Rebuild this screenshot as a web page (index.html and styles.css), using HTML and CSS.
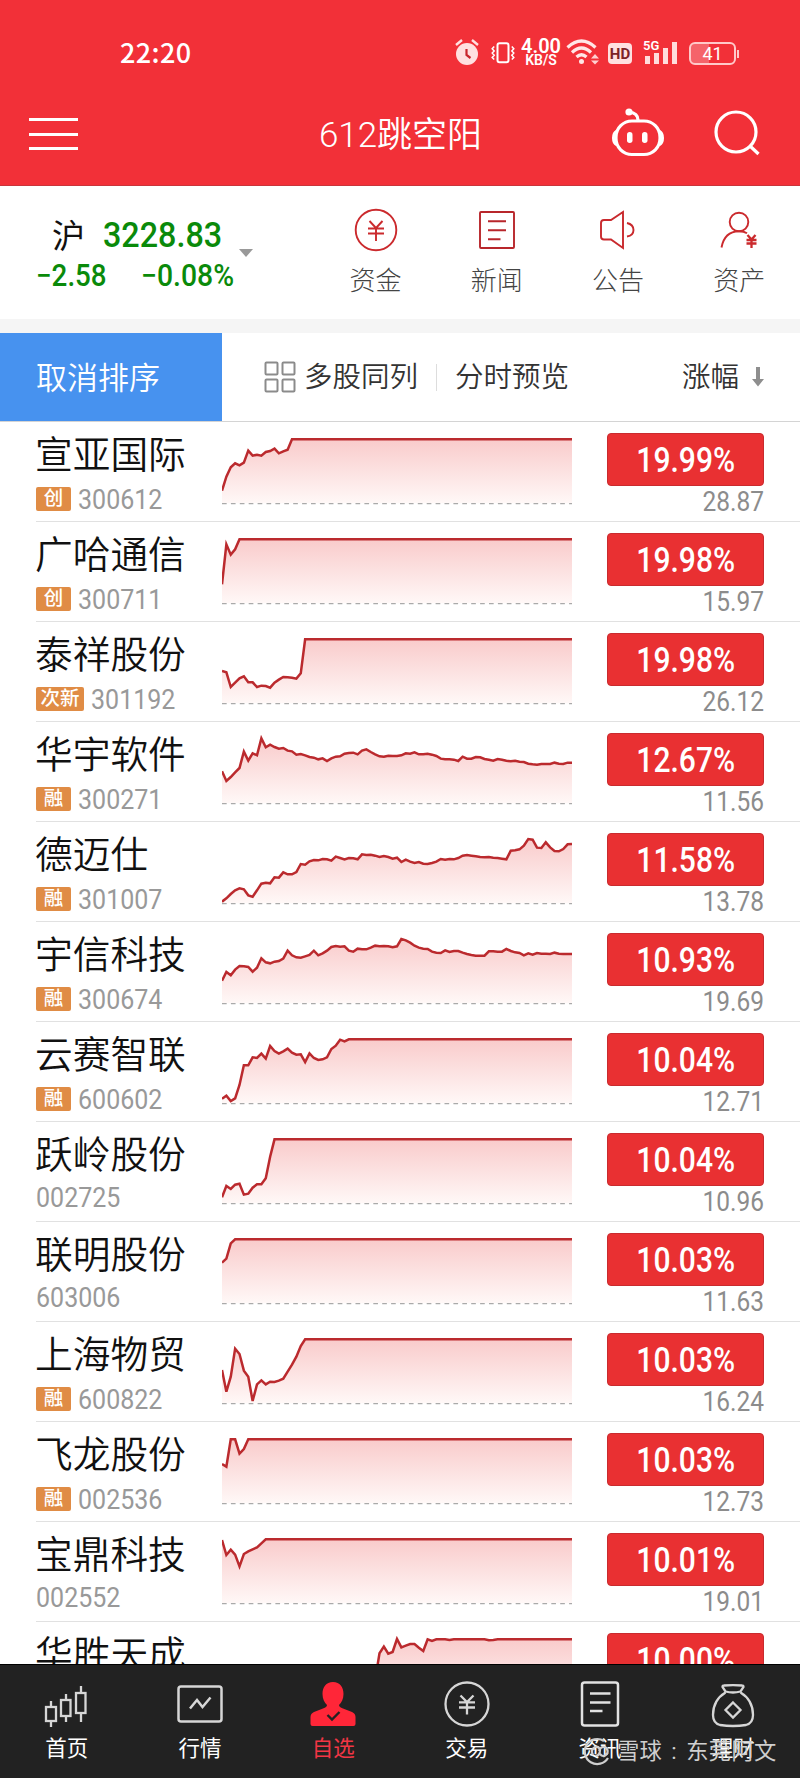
FILE: index.html
```html
<!DOCTYPE html>
<html lang="zh-CN">
<head>
  <meta charset="UTF-8">
  <meta name="viewport" content="width=device-width, initial-scale=1.0">
  <title>自选</title>
  <link rel="stylesheet" href="styles.css">
</head>
<body>
  <div class="app">
    <header class="header">
      <div class="status">
        <span class="time">22:20</span>
        <div class="status-icons">
          <svg class="ic-alarm" width="24" height="27" viewBox="0 0 24 27">
            <circle cx="12" cy="15" r="11" fill="#ffe0e0"/>
            <path d="M1 6l6-5M23 6l-6-5" stroke="#ffe0e0" stroke-width="2.4"/>
            <path d="M11.500 10v6l4 3" fill="none" stroke="#c8252d" stroke-width="2.200"/>
          </svg>
          <svg class="ic-vibrate" width="24" height="22" viewBox="0 0 24 22">
            <rect x="6.500" y="1.300" width="11" height="19" rx="2" fill="none" stroke="#fff" stroke-width="2"/>
            <path d="M3.200 4.500l-2 2.200 2 2.200-2 2.200 2 2.200-2 2.200 2 2M20.800 4.500l2 2.200-2 2.200 2 2.200-2 2.200 2 2.200-2 2" fill="none" stroke="#fff" stroke-width="1.500"/>
          </svg>
          <div class="speed"><b>4.00</b><span>KB/S</span></div>
          <svg class="ic-wifi" width="34" height="26" viewBox="0 0 34 26">
            <g fill="none" stroke="#ffe6e6" stroke-width="3.200">
              <path d="M1.500 8.500Q15.500-4.500 29.500 8.500"/>
              <path d="M6 13.500Q15.500 4.500 25 13.500"/>
              <path d="M10.500 18Q15.500 13.500 20.500 18"/>
            </g>
            <circle cx="15.500" cy="22.500" r="2.500" fill="#ffe6e6"/>
            <path d="M25 19.500l4-4.500 4 4.500zM25 21.500l4 4 4-4z" fill="#ffd0d0"/>
          </svg>
          <span class="hd">HD</span>
          <div class="signal">
            <small>5G</small>
            <svg width="36" height="24" viewBox="0 0 36 24" fill="#ffdcdc">
              <rect x="3" y="15" width="5" height="8"/>
              <rect x="12" y="12" width="5" height="11"/>
              <rect x="21" y="7" width="5" height="16"/>
              <rect x="30" y="1" width="5" height="22"/>
            </svg>
          </div>
          <div class="battery">41</div>
        </div>
      </div>
      <div class="titlebar">
        <div class="menu"><i></i><i></i><i></i></div>
        <h1>612跳空阳</h1>
        <svg class="ic-robot" width="54" height="50" viewBox="0 0 54 50">
          <g fill="none" stroke="#fff" stroke-width="3.200">
            <rect x="5" y="14" width="44" height="33.500" rx="16"/>
            <path d="M27 13Q27 6 18 5"/>
          </g>
          <circle cx="18" cy="5" r="3.600" fill="#fff"/>
          <path d="M5 23Q1 25 1 31q0 6 4 8zM49 23q4 2 4 8 0 6-4 8z" fill="#fff"/>
          <rect x="16" y="25" width="5.500" height="11" rx="2.700" fill="#fff"/>
          <rect x="31" y="25" width="5.500" height="11" rx="2.700" fill="#fff"/>
        </svg>
        <svg class="ic-search" width="46" height="46" viewBox="0 0 46 46" fill="none" stroke="#fff" stroke-width="3.200">
          <circle cx="22" cy="22" r="20"/>
          <path d="M35.500 35.500l9 8.500"/>
        </svg>
      </div>
    </header>

    <section class="summary">
      <div class="index">
        <div class="index-top"><span class="market">沪</span><span class="point">3228.83</span></div>
        <div class="index-sub"><span class="change">−2.58</span><span class="rate">−0.08%</span></div>
        <i class="caret"></i>
      </div>
      <ul class="shortcuts">
        <li>
          <svg width="44" height="44" viewBox="0 0 44 44" fill="none" stroke="#cb2a2d" stroke-width="1.900">
            <circle cx="22" cy="22" r="20.300"/>
            <path d="M15.500 13l6.500 7 6.500-7M14 20.500h16M14 25.500h16M22 20.500V33"/>
          </svg>
          <span>资金</span>
        </li>
        <li>
          <svg width="44" height="44" viewBox="0 0 44 44" fill="none" stroke="#b8262b" stroke-width="1.900">
            <rect x="5" y="4" width="34" height="36" rx="1"/>
            <path d="M13 13.300h18M13 22.300h18M13 31.300h12.500"/>
          </svg>
          <span>新闻</span>
        </li>
        <li>
          <svg width="44" height="44" viewBox="0 0 44 44" fill="none" stroke="#c9292d" stroke-width="1.900">
            <path d="M5 15q0-3 3-3h7l12-8v36l-12-8.500H8q-3 0-3-3z"/>
            <path d="M31 15q6.500 1.500 6.500 7T31 28.500"/>
          </svg>
          <span>公告</span>
        </li>
        <li>
          <svg width="44" height="44" viewBox="0 0 44 44" fill="none" stroke="#cb2a2d" stroke-width="1.900">
            <circle cx="22" cy="14" r="9.300"/>
            <path d="M4.500 39.500Q7.500 23.500 22 23.300q5 0 8 2"/>
            <path d="M30.500 27l4 4.500 4-4.500M29.500 32h10M29.500 35.500h10M34.500 31.500V40" stroke-width="2.300"/>
          </svg>
          <span>资产</span>
        </li>
      </ul>
    </section>

    <section class="toolbar">
      <button class="cancel">取消排序</button>
      <div class="tools">
        <svg width="32" height="32" viewBox="0 0 32 32" fill="none" stroke="#8b8b8b" stroke-width="2">
          <rect x="1.500" y="1.500" width="12" height="12" rx="1"/><rect x="18.500" y="1.500" width="12" height="12" rx="1"/>
          <rect x="1.500" y="18.500" width="12" height="12" rx="1"/><rect x="18.500" y="18.500" width="12" height="12" rx="1"/>
        </svg>
        <span class="multi">多股同列</span>
        <span class="preview">分时预览</span>
        <span class="sort">涨幅</span>
        <svg class="ic-down" width="12" height="20" viewBox="0 0 12 20" fill="#8e8e8e"><path d="M4 0h4v12h4l-6 7.500L0 12h4z"/></svg>
      </div>
    </section>

    <main class="list" id="list"></main>

    <nav class="nav">
      <a>
        <svg width="46" height="46" viewBox="0 0 46 46" fill="none" stroke="#d6d6d6" stroke-width="2.300">
          <path d="M7 20v6M7 40v6M22 13v6M22 35v6M37 5v7M37 32v9"/>
          <rect x="2" y="26" width="10" height="14"/><rect x="17" y="19" width="9.500" height="16"/><rect x="32" y="12" width="9.500" height="20"/>
        </svg>
        <span>首页</span>
      </a>
      <a>
        <svg width="46" height="46" viewBox="0 0 46 46" fill="none" stroke="#d6d6d6" stroke-width="2.500">
          <rect x="1.500" y="5.500" width="43" height="35" rx="2.500"/>
          <path d="M13 27.500l7-8.500 5.500 7 8-9.500"/>
        </svg>
        <span>行情</span>
      </a>
      <a class="active">
        <svg width="46" height="46" viewBox="0 0 46 46">
          <path d="M23 1c7 0 10.500 5 10.500 12 0 5-2 8.500-4.500 11q0 2 4 3.500l9 3.500q3.500 1.500 3.500 5v7q0 2-2 2h-41q-2 0-2-2v-7q0-3.500 3.500-5l9-3.500q4-1.500 4-3.500c-2.500-2.500-4.500-6-4.500-11C12.500 6 16 1 23 1z" fill="#ff2638"/>
          <path d="M17.500 34l4.500 4.500 7.500-7.500" fill="none" stroke="#222" stroke-width="2.400"/>
        </svg>
        <span>自选</span>
      </a>
      <a>
        <svg width="46" height="46" viewBox="0 0 46 46" fill="none" stroke="#d6d6d6" stroke-width="2.300">
          <circle cx="23" cy="23" r="21.500"/>
          <path d="M16.500 14.500l6.500 6.500 6.500-6.500M15 21.300h16M15 26.500h16M23 21v12.500"/>
        </svg>
        <span>交易</span>
      </a>
      <a>
        <svg width="46" height="46" viewBox="0 0 46 46" fill="none" stroke="#e2e2e2" stroke-width="2.500">
          <rect x="5" y="1.500" width="36" height="43" rx="2.500"/>
          <path d="M13 12.500h20.500M13 21.500h20.500M13 30h12.500"/>
        </svg>
        <span>资讯</span>
      </a>
      <a>
        <svg width="46" height="46" viewBox="0 0 46 46" fill="none" stroke="#d6d6d6" stroke-width="2.300">
          <path d="M15.500 10.500l-3-4.500q0-1.500 1.500-1.500 9-.8 18 0 1.500 0 1.500 1.500l-3 4.500q-7.500 2-15 0zM15.500 11.500Q3 19 3 34q0 8 7 10 13 2 26 0 7-2 7-10 0-15-12.500-22.500"/>
          <path d="M23 21.500l7.500 7.500-7.500 7.500-7.500-7.500z"/>
        </svg>
        <span>理财</span>
      </a>
      <div class="watermark">
        <svg width="28" height="28" viewBox="0 0 28 28" fill="none" stroke="#cfcfcf" stroke-width="2.200">
          <path d="M20 4A12.500 12.500 0 1 0 24 21"/>
          <path d="M9 18q-3-5 2-8 4-1 5 3 0 5-4 6M15 14q2-5 6-4 4 3 2 7-4 4-7 0"/>
        </svg>
        <span>雪球<i>:</i>东莞阿文</span>
      </div>
    </nav>
  </div>
  <script src="script.js"></script>
</body>
</html>
```
FILE: styles.css
```css
* {
  box-sizing: border-box;
  margin: 0;
  padding: 0;
}

body {
  font-family: Roboto, 'Noto Sans CJK SC', sans-serif;
  background: #fff;
  color: #111;
  overflow: hidden;
}

.app {
  width: 800px;
  height: 1778px;
  display: flex;
  flex-direction: column;
  overflow: hidden;
}

/* Header */
.header {
  height: 186px;
  flex: none;
  background: #f23038;
  border-bottom: 1px solid #c9353b;
  color: #fff;
}

.status {
  height: 84px;
  padding: 22px 60px 0 120px;
  display: flex;
  align-items: center;
  justify-content: space-between;
}

.time {
  font-family: 'Noto Sans CJK SC', sans-serif;
  font-weight: 500;
  font-size: 27px;
  line-height: 34px;
  letter-spacing: 0.4px;
  margin-top: -2px;
}

.status-icons {
  display: flex;
  align-items: center;
}

.ic-alarm {
  margin-top: -1px;
}

.ic-vibrate {
  margin-left: 12px;
}

.speed {
  width: 40px;
  margin-left: 6px;
  display: flex;
  flex-direction: column;
  align-items: center;
  line-height: 13px;
  font-size: 14px;
  font-weight: 600;
}

.speed b {
  font-size: 20px;
  font-weight: 600;
  line-height: 15px;
}

.ic-wifi {
  margin: -2px 0 0 5px;
}

.hd {
  width: 24px;
  height: 21px;
  margin-left: 8px;
  border-radius: 4px;
  background: #ffe0e0;
  color: #7d2226;
  font-size: 15px;
  font-weight: 700;
  line-height: 22px;
  text-align: center;
}

.signal {
  position: relative;
  height: 24px;
  margin-left: 10px;
}

.signal small {
  position: absolute;
  left: 1px;
  top: -2px;
  font-size: 13px;
  font-weight: 600;
  line-height: 14px;
}

.battery {
  position: relative;
  width: 47px;
  height: 23px;
  margin: 0 4px 0 11px;
  border: 2px solid #ffc9c9;
  border-radius: 6px;
  background: linear-gradient(90deg, #f5636a 41%, transparent 41%);
  font-size: 18px;
  line-height: 20px;
  text-align: center;
}

.battery::after {
  content: '';
  position: absolute;
  right: -5px;
  top: 6px;
  width: 2px;
  height: 8px;
  background: #ffc9c9;
}

.titlebar {
  height: 100px;
  padding: 0 40px 0 29px;
  display: flex;
  align-items: center;
}

.menu {
  width: 49px;
  display: flex;
  flex-direction: column;
  gap: 11.5px;
}

.menu i {
  height: 3px;
  background: #fff;
}

.titlebar h1 {
  flex: 1;
  padding: 0 0 6px 112px;
  font-size: 35px;
  font-weight: 350;
  text-align: center;
}

.ic-robot {
  margin-top: -4px;
}

.ic-search {
  margin: -3px 0 0 49px;
}

/* Index summary and shortcuts */
.summary {
  height: 147px;
  flex: none;
  display: flex;
  border-bottom: 14px solid #f5f5f5;
}

.index {
  position: relative;
  width: 315px;
  padding: 27px 0 0 36px;
}

.index-top {
  display: flex;
  align-items: center;
  height: 44px;
  padding-left: 16px;
}

.market {
  width: 51px;
  margin-top: -3px;
  font-size: 33px;
  font-weight: 400;
}

/* Figures are squeezed to the narrow look of the app's number font */
.point, .change, .rate, .pct span, .code b, .price {
  transform: scaleX(0.91);
  transform-origin: left;
}

.point {
  color: #0a8a0a;
  font-size: 35.5px;
  font-weight: 500;
}

.index-sub {
  display: flex;
  margin-top: 1px;
  color: #0a8a0a;
  font-size: 30.5px;
  font-weight: 500;
  line-height: 36px;
}

.change {
  width: 105px;
}

.rate {
  transform: scaleX(0.93);
}

.caret {
  position: absolute;
  left: 239px;
  top: 63px;
  border: 7px solid transparent;
  border-top: 8px solid #999;
  border-bottom: 0;
}

.shortcuts {
  flex: 1;
  display: flex;
  list-style: none;
}

.shortcuts li {
  width: 121.2px;
  padding-top: 22px;
  display: flex;
  flex-direction: column;
  align-items: center;
}

.shortcuts span {
  margin-top: 10px;
  font-size: 26px;
  font-weight: 300;
  line-height: 38px;
  color: #444;
}

/* Sort toolbar */
.toolbar {
  height: 89px;
  flex: none;
  display: flex;
  border-bottom: 1px solid #d4d4d4;
}

.cancel {
  width: 222px;
  height: 88px;
  padding: 0 26px 4px 0;
  border: 0;
  background: #4792ef;
  color: #fff;
  font: 350 31px Roboto, 'Noto Sans CJK SC', sans-serif;
}

.tools {
  flex: 1;
  display: flex;
  align-items: center;
  padding: 0 36px 0 42px;
  font-size: 28.5px;
  font-weight: 350;
  line-height: 27px;
  color: #333;
}

.multi {
  margin-left: 8px;
}

.preview {
  margin-left: 18px;
  padding-left: 18px;
  border-left: 1px solid #ddd;
}

.sort {
  margin-left: auto;
}

.ic-down {
  margin-left: 13px;
}

/* Stock list */
.list {
  flex: 1;
  min-height: 0;
  overflow: hidden;
}

.row {
  height: 100px;
  margin-left: 36px;
  padding-right: 36px;
  display: flex;
  border-bottom: 1px solid #e1e1e1;
}

.stock {
  width: 186px;
  padding-top: 10px;
}

.name {
  margin-left: -1px;
  font-size: 37.7px;
  font-weight: 350;
  line-height: 46px;
  white-space: nowrap;
}

.code {
  height: 26px;
  margin-top: 8px;
  display: flex;
  align-items: center;
  font-size: 27.5px;
  color: #999;
}

.code b {
  margin-top: 1px;
  font-weight: 400;
}

.row.plain .code {
  margin-top: 6px;
}

.tag {
  height: 24px;
  margin-right: 7px;
  padding: 0 4.5px;
  min-width: 35px;
  border-radius: 2px;
  background: #e08c45;
  color: #fff;
  font-size: 19.5px;
  font-weight: 500;
  line-height: 24px;
  text-align: center;
}

.chart {
  width: 350px;
  height: 99px;
  display: block;
}

.chart .area {
  fill: url(#fade);
}

.chart .line {
  fill: none;
  stroke: #bb2a2e;
  stroke-width: 7.5;
}

.chart .base {
  stroke: #aaa;
  stroke-width: 4;
  stroke-dasharray: 14 12.700;
}

.quote {
  width: 157px;
  margin-left: auto;
  padding-top: 11px;
  text-align: right;
}

.pct {
  height: 53px;
  border-radius: 4px;
  border: 1px solid #c92b2e;
  background: #e93032;
  color: #fff;
  font-size: 34.5px;
  font-weight: 500;
  line-height: 53px;
  text-align: center;
}

.pct span {
  display: inline-block;
  transform: scaleX(0.87);
  transform-origin: center;
}

.price {
  font-size: 27.5px;
  line-height: 31px;
  color: #8c8c8c;
  transform: scaleX(0.89);
  transform-origin: right;
}

/* Bottom navigation */
.nav {
  position: relative;
  height: 114px;
  flex: none;
  display: flex;
  background: #222;
  border-top: 1px solid #000;
  color: #fff;
}

.nav a {
  flex: 1;
  padding-top: 16px;
  display: flex;
  flex-direction: column;
  align-items: center;
}

.nav svg {
  overflow: visible;
}

.nav a span {
  margin-top: 6px;
  font-size: 21.5px;
  line-height: 32px;
}

.nav .active {
  color: #f23645;
}

.watermark {
  position: absolute;
  left: 584px;
  top: 72px;
  display: flex;
  align-items: center;
  gap: 5px;
  color: #cfcfcf;
  font-size: 22.3px;
  line-height: 28px;
  letter-spacing: 0.3px;
  white-space: nowrap;
}

.watermark span {
  display: flex;
}

.watermark i {
  width: 24px;
  font-style: normal;
  text-align: center;
}
```
FILE: script.js
```js
// Intraday points, one per 3 minutes. The last value runs on to the close.
const stocks = [
  { name: '宣亚国际', tag: '创', code: '300612', pct: '19.99%', price: '28.87',
    points: [212,170,142,130,136,128,92,107,104,107,96,93,86,100,94,89,58] },
  { name: '广哈通信', tag: '创', code: '300711', pct: '19.98%', price: '15.97',
    points: [193,73,104,88,58] },
  { name: '泰祥股份', tag: '次新', code: '301192', pct: '19.98%', price: '26.12',
    points: [153,157,201,188,175,169,187,187,201,197,198,203,188,179,171,172,173,176,160,58] },
  { name: '华宇软件', tag: '融', code: '300271', pct: '12.67%', price: '11.56',
    points: [154,183,171,157,144,95,122,100,106,55,82,74,81,86,84,92,94,104,102,106,111,113,118,115,123,115,110,109,101,99,98,103,92,88,96,103,109,110,107,108,108,106,100,101,97,103,103,101,104,108,116,118,118,119,123,110,116,116,111,112,117,119,122,117,119,122,124,122,125,126,131,133,134,132,132,132,128,131,132,128,128] },
  { name: '德迈仕', tag: '融', code: '301007', pct: '11.58%', price: '13.78',
    points: [245,235,222,211,205,208,226,230,211,191,188,190,172,173,157,163,163,156,132,134,124,120,121,117,118,122,110,114,118,114,115,118,103,105,104,107,111,108,111,116,113,126,119,125,129,126,131,132,129,125,117,119,117,118,114,107,105,107,109,111,112,111,113,114,116,118,92,91,88,77,57,59,83,84,67,82,93,94,87,73,72] },
  { name: '宇信科技', tag: '融', code: '300674', pct: '10.93%', price: '19.69',
    points: [182,156,166,149,138,139,141,155,143,115,127,130,125,123,116,92,106,112,113,109,105,92,106,100,92,81,78,80,79,92,95,86,88,88,83,77,79,78,79,82,79,57,61,68,77,83,86,87,95,98,99,91,96,93,93,98,102,105,107,107,107,94,94,95,95,87,93,97,99,106,100,104,99,101,101,102,98,101,102,102,102] },
  { name: '云赛智联', tag: '融', code: '600602', pct: '10.04%', price: '12.71',
    points: [236,227,243,235,195,136,136,112,114,101,116,78,93,101,94,86,98,104,103,126,100,114,120,118,112,87,77,59,64,58] },
  { name: '跃岭股份', code: '002725', pct: '10.04%', price: '10.96',
    points: [232,198,207,194,191,224,221,203,193,193,175,110,58] },
  { name: '联明股份', code: '603006', pct: '10.03%', price: '11.63',
    points: [128,116,70,58] },
  { name: '上海物贸', tag: '融', code: '600822', pct: '10.03%', price: '16.24',
    points: [150,215,170,86,102,152,170,243,193,181,193,185,186,182,176,155,134,110,78,58] },
  { name: '飞龙股份', tag: '融', code: '002536', pct: '10.03%', price: '12.73',
    points: [132,140,58,58,101,87,58] },
  { name: '宝鼎科技', code: '002552', pct: '10.01%', price: '19.01',
    points: [60,105,89,104,139,102,94,88,82,70,58] },
  { name: '华胜天成', code: '', pct: '10.00%', price: '',
    points: [...Array(36).fill(180),100,80,101,96,57,82,77,72,72,83,93,58,63,58,58,58,60,58,58,58,58,58,58,58,58,61,60,58] }
];

const STEP = 1050 / 80;

function chart(points) {
  const coords = points.map((y, i) => `${(i * STEP).toFixed(1)},${y}`).join(' ');
  const end = `1050,${points[points.length - 1]}`;
  return `
    <svg class="chart" viewBox="0 6 1050 297">
      <defs>
        <linearGradient id="fade" x1="0" y1="0" x2="0" y2="1">
          <stop offset="0" stop-color="#f9cbcb"/>
          <stop offset="1" stop-color="#fff8f7"/>
        </linearGradient>
      </defs>
      <polygon class="area" points="0,250 ${coords} ${end} 1050,250"/>
      <line class="base" x1="0" y1="251" x2="1050" y2="251"/>
      <polyline class="line" points="${coords} ${end}"/>
    </svg>`;
}

document.getElementById('list').innerHTML = stocks.map(s => `
  <div class="row ${s.tag ? '' : 'plain'}">
    <div class="stock">
      <div class="name">${s.name}</div>
      <div class="code">${s.tag ? `<span class="tag">${s.tag}</span>` : ''}<b>${s.code}</b></div>
    </div>
    ${chart(s.points)}
    <div class="quote">
      <div class="pct"><span>${s.pct}</span></div>
      <div class="price">${s.price}</div>
    </div>
  </div>`).join('');
```
